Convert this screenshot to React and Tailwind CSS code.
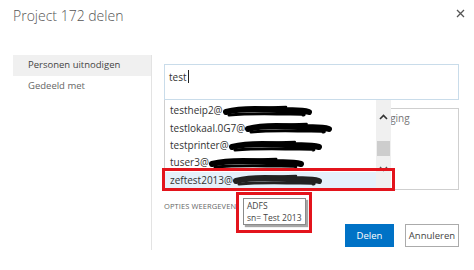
import React from "react";

function Scribble({ w, tone = "black" }) {
  const h = 14;
  return (
    <svg width={w} height={h} viewBox={`0 0 ${w} ${h}`} className="shrink-0">
      <path
        d={`M3 8 C ${w * 0.2} 4, ${w * 0.45} 5, ${w * 0.6} 6 S ${w * 0.85} 5, ${w - 4} 8`}
        stroke={tone}
        strokeWidth="6"
        fill="none"
        strokeLinecap="round"
      />
      <path
        d={`M6 11 C ${w * 0.3} 9, ${w * 0.55} 10, ${w * 0.75} 10 S ${w * 0.9} 11, ${w - 10} 11`}
        stroke={tone}
        strokeWidth="3"
        fill="none"
        strokeLinecap="round"
      />
      <path
        d={`M${w * 0.35} 4 L ${w * 0.7} 3`}
        stroke={tone}
        strokeWidth="2.5"
        fill="none"
        strokeLinecap="round"
      />
    </svg>
  );
}

const rows = [
  { name: "testheip2@", w: 90 },
  { name: "testlokaal.0G7@", w: 88 },
  { name: "testprinter@", w: 94 },
  { name: "tuser3@", w: 96 },
  { name: "zeftest2013@", w: 90, sel: true },
];

export default function App() {
  return (
    <div className="relative w-[474px] h-[270px] bg-white overflow-hidden font-['Open_Sans','Noto_Sans',sans-serif] text-[#444]">
      {/* header */}
      <div className="flex justify-between items-start h-[55px] pl-[13px] pr-[9px] pt-[6px]">
        <div className="text-[14px] leading-[20px] font-light text-[#555]">Project 172 delen</div>
        <svg width="9" height="9" viewBox="0 0 9 9" className="mt-[3px]">
          <path d="M1 1 L8 8 M8 1 L1 8" stroke="#555" strokeWidth="1.3" />
        </svg>
      </div>

      {/* body */}
      <div className="flex">
        <div className="ml-[13px] w-[138px] flex flex-col">
          <div className="h-[21px] bg-[#f0f0f0] pl-[15px] flex items-center text-[9.5px] font-medium text-[#444]">
            Personen uitnodigen
          </div>
          <div className="h-[21px] pl-[15px] flex items-center text-[9.5px] text-[#666]">Gedeeld met</div>
        </div>
        <div className="w-px h-[195px] bg-[#e3e3e3]" />
        <div className="ml-[12px] w-[295px] pt-[9px] flex flex-col">
          <div className="h-[36px] border border-[#c9dcea] px-[4px] pt-[5px] text-[10px] leading-[14px] text-[#333] flex items-start">
            <span>test</span>
            <span className="w-px h-[13px] bg-[#222] ml-[1px]" />
          </div>
          <div className="mt-[8px] h-[82px] border border-[#cfcfcf] overflow-hidden">
            <div className="whitespace-nowrap pl-[5px] pt-[2px] text-[10px] text-[#777]">
              Voeg een persoonlijk bericht toe aan de uitnodiging
            </div>
          </div>
          <div className="mt-[11px] text-[7.5px] tracking-[0.1px] uppercase text-[#666]">Opties weergeven</div>
          <div className="mt-[12px] flex justify-end gap-[11px]">
            <div className="w-[49px] h-[23px] bg-[#0072c6] text-white text-[9.5px] flex items-center justify-center">
              Delen
            </div>
            <div className="w-[54px] h-[23px] border border-[#ababab] bg-white text-[#444] text-[9.5px] flex items-center justify-center">
              Annuleren
            </div>
          </div>
        </div>
      </div>

      {/* dropdown overlay */}
      <div className="absolute left-[164px] top-[100px] w-[227px] h-[90px] bg-white border-l border-b border-[#cfcfcf] flex">
        <div className="flex-1 pt-[2px] flex flex-col">
          {rows.map((r) => (
            <div
              key={r.name}
              className={`h-[17.5px] pl-[5px] flex items-center text-[10px] text-[#333] ${r.sel ? "bg-[#e5f1fb]" : ""}`}
            >
              <span>{r.name}</span>
              <Scribble w={r.w} tone={r.sel ? "#222" : "black"} />
            </div>
          ))}
        </div>
        <div className="w-[15px] bg-[#f0f0f0] flex flex-col items-center">
          <svg width="9" height="6" viewBox="0 0 9 6" className="mt-[14px]">
            <path d="M1 5 L4.5 1.5 L8 5" stroke="#333" strokeWidth="1.6" fill="none" />
          </svg>
          <div className="mt-[21px] w-[13px] h-[15px] bg-[#cdcdcd]" />
          <svg width="9" height="6" viewBox="0 0 9 6" className="mt-[10px]">
            <path d="M1 1 L4.5 4.5 L8 1" stroke="#555" strokeWidth="1.4" fill="none" />
          </svg>
        </div>
      </div>

      {/* red annotation around selected row */}
      <div className="absolute left-[162px] top-[168px] w-[233px] h-[23px] border-[3px] border-[#e3141c]" />

      {/* tooltip annotation */}
      <div className="absolute left-[236px] top-[192px] w-[76px] h-[41px] border-[3px] border-[#e3141c] bg-transparent">
        <div className="absolute left-[4px] top-[3px] w-[63px] h-[27px] bg-white border border-[#8a8a8a] shadow-[2px_2px_1px_rgba(0,0,0,0.35)] pl-[3px] text-[8.5px] leading-[12px] text-[#444] pt-[1px]">
          <div>ADFS</div>
          <div>sn= Test 2013</div>
        </div>
      </div>
    </div>
  );
}
